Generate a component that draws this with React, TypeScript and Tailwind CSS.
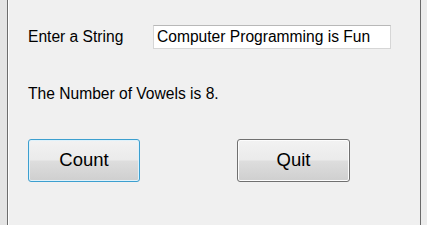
export default function App() {
  return (
    <div
      className="flex h-[225px] w-[427px] overflow-hidden bg-[#f0f0f0] text-black"
      style={{ fontFamily: '"Liberation Sans", Arial, sans-serif' }}
    >
      {/* window behind, left edge */}
      <div className="h-full w-[8px] border-r border-[#6d6d6d] bg-[#e4e4e4]" />

      {/* form */}
      <div className="flex h-full flex-1 flex-col border-l border-white pl-[19px]">
        <div className="mt-[25px] flex h-[24px] items-center">
          <span className="w-[125px] text-[15.6px] leading-none">Enter a String</span>
          <div className="flex h-[24px] w-[238px] items-center border border-[#d6d6d6] border-t-[#b8b8b8] bg-white pl-[3px] text-[15.6px] leading-none">
            Computer Programming is Fun
          </div>
        </div>

        <p className="mt-[37px] text-[15.6px] leading-none">The Number of Vowels is 8.</p>

        <div className="mt-[37px] flex gap-[97px]">
          <button className="flex h-[43px] w-[112px] items-center justify-center rounded-[3px] border border-[#3c9fcf] bg-[linear-gradient(#f2f2f2_0%,#ebebeb_48%,#dddddd_52%,#cfcfcf_100%)] text-[18.5px] shadow-[inset_0_0_0_1px_#dff2fb]">
            Count
          </button>
          <button className="flex h-[43px] w-[113px] items-center justify-center rounded-[3px] border border-[#707070] bg-[linear-gradient(#f2f2f2_0%,#ebebeb_48%,#dddddd_52%,#cfcfcf_100%)] text-[18.5px] shadow-[inset_0_0_0_1px_#fcfcfc]">
            Quit
          </button>
        </div>
      </div>

      {/* right frame edge */}
      <div className="h-full w-[7px] border-l border-[#6a6a6a] bg-[#ececec]" />
    </div>
  );
}
